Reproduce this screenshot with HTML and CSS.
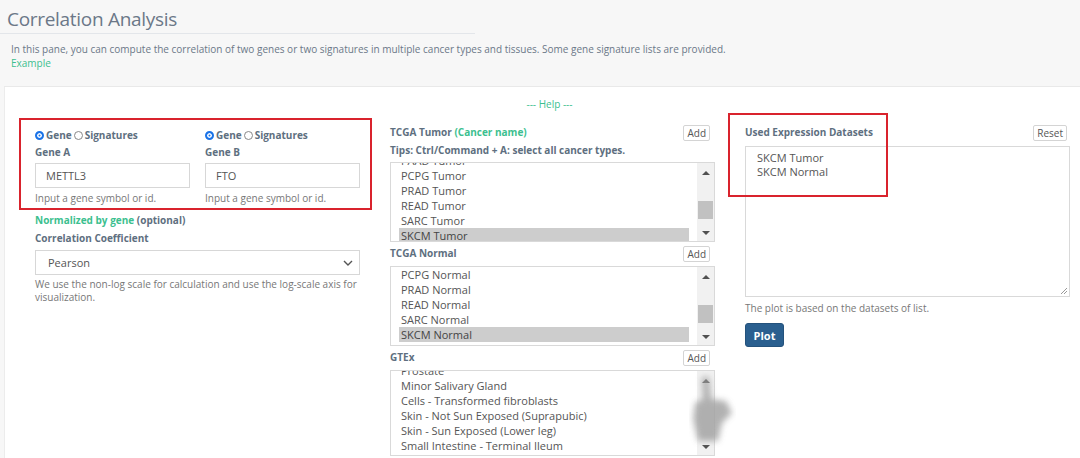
FILE: index.html
```html
<!DOCTYPE html>
<html lang="en">
<head>
    <meta charset="UTF-8">
    <title>Correlation Analysis</title>
    <link rel="stylesheet" href="styles.css">
</head>
<body>
    <div class="page-header">
        <h1 class="title">Correlation Analysis</h1>
        <p class="intro">In this pane, you can compute the correlation of two genes or two signatures in multiple cancer types and tissues. Some gene signature lists are provided.</p>
        <a class="example" href="#">Example</a>
    </div>

    <div class="panel">
        <div class="help"><a href="#">--- Help ---</a></div>
        <div class="columns">
            <!-- genes -->
            <div class="col-left">
                <div class="gene-box">
                    <div class="gene-field">
                        <div class="radios">
                            <span class="radio checked"></span><b>Gene</b>
                            <span class="radio"></span><b>Signatures</b>
                        </div>
                        <label class="lbl">Gene A</label>
                        <div class="text-input">METTL3</div>
                        <p class="hint">Input a gene symbol or id.</p>
                    </div>
                    <div class="gene-field">
                        <div class="radios">
                            <span class="radio checked"></span><b>Gene</b>
                            <span class="radio"></span><b>Signatures</b>
                        </div>
                        <label class="lbl">Gene B</label>
                        <div class="text-input">FTO</div>
                        <p class="hint">Input a gene symbol or id.</p>
                    </div>
                </div>
                <div class="options">
                    <div class="lbl"><span class="green">Normalized by gene</span> (optional)</div>
                    <div class="lbl coef">Correlation Coefficient</div>
                    <div class="select">
                        <span>Pearson</span>
                        <svg width="10" height="6" viewBox="0 0 10 6"><path d="M1 1l4 4 4-4" fill="none" stroke="#555" stroke-width="1.4"/></svg>
                    </div>
                    <p class="hint">We use the non-log scale for calculation and use the log-scale axis for visualization.</p>
                </div>
            </div>

            <!-- datasets -->
            <div class="col-mid">
                <div class="list-head first">
                    <div>
                        <div class="lbl">TCGA Tumor <span class="green">(Cancer name)</span></div>
                        <div class="lbl tips">Tips: Ctrl/Command + A: select all cancer types.</div>
                    </div>
                    <button class="btn-small">Add</button>
                </div>
                <div class="listbox">
                    <ul class="items shift-tumor">
                        <li>PAAD Tumor</li>
                        <li>PCPG Tumor</li>
                        <li>PRAD Tumor</li>
                        <li>READ Tumor</li>
                        <li>SARC Tumor</li>
                        <li class="sel">SKCM Tumor</li>
                    </ul>
                    <div class="scrollbar">
                        <span class="arrow up"></span>
                        <span class="thumb"></span>
                        <span class="arrow down"></span>
                    </div>
                </div>

                <div class="list-head">
                    <div class="lbl">TCGA Normal</div>
                    <button class="btn-small">Add</button>
                </div>
                <div class="listbox">
                    <ul class="items">
                        <li>PCPG Normal</li>
                        <li>PRAD Normal</li>
                        <li>READ Normal</li>
                        <li>SARC Normal</li>
                        <li class="sel">SKCM Normal</li>
                        <li>STAD Normal</li>
                    </ul>
                    <div class="scrollbar">
                        <span class="arrow up"></span>
                        <span class="thumb"></span>
                        <span class="arrow down"></span>
                    </div>
                </div>

                <div class="list-head">
                    <div class="lbl">GTEx</div>
                    <button class="btn-small">Add</button>
                </div>
                <div class="listbox tall">
                    <ul class="items shift-gtex">
                        <li>Prostate</li>
                        <li>Minor Salivary Gland</li>
                        <li>Cells - Transformed fibroblasts</li>
                        <li>Skin - Not Sun Exposed (Suprapubic)</li>
                        <li>Skin - Sun Exposed (Lower leg)</li>
                        <li>Small Intestine - Terminal Ileum</li>
                    </ul>
                    <div class="scrollbar">
                        <span class="arrow up"></span>
                        <span class="thumb hidden"></span>
                        <span class="arrow down"></span>
                    </div>
                </div>
            </div>

            <!-- used datasets -->
            <div class="col-right">
                <div class="list-head used-head">
                    <div class="lbl">Used Expression Datasets</div>
                    <button class="btn-small">Reset</button>
                </div>
                <div class="textarea">SKCM Tumor<br>SKCM Normal
                    <svg class="grip" width="9" height="9" viewBox="0 0 9 9"><path d="M8 2L2 8M8 5L5 8" stroke="#999" stroke-width="1"/></svg>
                </div>
                <p class="hint">The plot is based on the datasets of list.</p>
                <button class="btn-plot">Plot</button>
                <div class="mark"></div>
            </div>
        </div>
        <svg class="smudge" width="56" height="84" viewBox="0 0 56 84">
            <defs><filter id="soft"><feGaussianBlur stdDeviation="3"/></filter></defs>
            <path d="M18 8 L25 8 L27 30 L42 32 L48 44 L38 54 L34 72 L14 72 L9 50 L11 34 L19 30 Z" fill="#a4a4a4" opacity="0.85" filter="url(#soft)"/>
        </svg>
    </div>
</body>
</html>
```

FILE: styles.css
```css
body {
    margin: 0;
    background-color: #f7f7f7;
    font-family: "Open Sans", "Noto Sans", sans-serif;
    font-size: 10px;
    color: #666;
    width: 1080px;
    height: 458px;
    overflow: hidden;
}
.page-header {
    height: 86px;
}
.title {
    margin: 0;
    width: 475px;
    padding: 8px 0 0 7px;
    height: 34px;
    box-sizing: border-box;
    border-bottom: 1px solid #e3e6ea;
    font-size: 19px;
    letter-spacing: -0.3px;
    font-weight: normal;
    color: #6b7888;
    line-height: 22px;
}
.intro {
    margin: 8px 0 0 11px;
    color: #6b7888;
    line-height: 14px;
}
.example {
    display: block;
    margin-left: 11px;
    color: #3cbf8f;
    text-decoration: none;
    line-height: 14px;
}
.panel {
    position: relative;
    margin-left: 4px;
    background: #fff;
    border-top: 1px solid #e9e9e9;
    border-left: 1px solid #ececec;
    height: 380px;
    padding-left: 14px;
}
.help {
    text-align: center;
    padding-top: 10px;
    height: 21px;
}
.help a {
    color: #3cbf8f;
    text-decoration: none;
}
.columns {
    display: flex;
}
.col-left {
    width: 353px;
}
.col-mid {
    width: 325px;
    margin-left: 18px;
}
.col-right {
    position: relative;
    width: 325px;
    margin-left: 30px;
}
.gene-box {
    display: flex;
    gap: 15px;
    border: 2px solid #d9232d;
    padding: 8px 0 0 14px;
    height: 92px;
    box-sizing: border-box;
}
.gene-field {
    width: 155px;
}
.radios {
    display: flex;
    align-items: center;
    color: #5e6f80;
    height: 14px;
    margin-bottom: 1px;
}
.radios b {
    margin: 0 2px 0 2px;
}
.radio {
    width: 9px;
    height: 9px;
    border: 1px solid #888;
    border-radius: 50%;
    box-sizing: border-box;
    background: #fff;
}
.radio.checked {
    border: 2px solid #1a73e8;
    background: #1a73e8;
    box-shadow: inset 0 0 0 1.5px #fff;
}
.lbl {
    display: block;
    font-weight: bold;
    color: #5e6f80;
    line-height: 18px;
}
.green {
    color: #3cbf8f;
}
.text-input {
    height: 25px;
    box-sizing: border-box;
    border: 1px solid #d7d7d7;
    padding-left: 10px;
    line-height: 23px;
    color: #555;
    font-size: 11px;
    margin-top: 2px;
}
.hint {
    margin: 4px 0 0 0;
    color: #777;
    line-height: 13px;
}
.options {
    padding-left: 16px;
    padding-right: 12px;
    margin-top: 1px;
}
.coef {
    margin-bottom: 3px;
}
.select {
    display: flex;
    justify-content: space-between;
    align-items: center;
    height: 25px;
    box-sizing: border-box;
    border: 1px solid #d7d7d7;
    padding: 0 6px 0 12px;
    font-size: 11px;
    color: #555;
}
.options .hint {
    margin-top: 3px;
}
.list-head {
    display: flex;
    justify-content: space-between;
    align-items: flex-start;
    padding-right: 5px;
    height: 24px;
    box-sizing: border-box;
    padding-top: 2px;
}
.list-head .btn-small {
    margin-top: 2px;
}
.list-head.first {
    height: auto;
    padding-top: 5px;
    margin-bottom: 3px;
}
.btn-small {
    font-family: inherit;
    font-size: 10px;
    color: #555;
    background: #fff;
    border: 1px solid #d4d4d4;
    border-radius: 2px;
    padding: 0 3px;
    height: 16px;
    line-height: 14px;
}
.listbox {
    display: flex;
    height: 80px;
    border: 1px solid #d9d9d9;
    box-sizing: border-box;
    overflow: hidden;
}
.listbox.tall {
    height: 86px;
}
.items {
    flex: 1;
    list-style: none;
    margin: 0;
    padding: 0 8px 0 8px;
    font-size: 11px;
    color: #555;
}
.items li {
    height: 15px;
    line-height: 15px;
    padding-left: 2px;
}
.items li.sel {
    background: #cdcdcd;
    color: #444;
}
.shift-tumor {
    margin-top: -10px;
}
.shift-gtex {
    margin-top: -8px;
}
.scrollbar {
    width: 17px;
    background: #f1f1f1;
    display: flex;
    flex-direction: column;
    align-items: center;
}
.arrow {
    width: 0;
    height: 0;
    border-left: 4px solid transparent;
    border-right: 4px solid transparent;
}
.arrow.up {
    border-bottom: 4px solid #505050;
    margin-top: 8px;
}
.arrow.down {
    border-top: 4px solid #505050;
    margin-top: auto;
    margin-bottom: 6px;
}
.thumb {
    width: 15px;
    height: 18px;
    background: #c1c1c1;
    margin-top: 26px;
}
.thumb.hidden {
    visibility: hidden;
}
.used-head {
    padding-top: 5px;
    padding-right: 3px;
    height: 28px;
}
.textarea {
    position: relative;
    height: 151px;
    box-sizing: border-box;
    border: 1px solid #d9d9d9;
    padding: 4px 11px;
    font-size: 11px;
    line-height: 14px;
    color: #555;
}
.grip {
    position: absolute;
    right: 1px;
    bottom: 1px;
}
.col-right .hint {
    margin-top: 5px;
}
.btn-plot {
    display: block;
    margin-top: 8px;
    font-family: inherit;
    font-size: 11px;
    font-weight: bold;
    color: #fff;
    background: #2a5f8f;
    border: 1px solid #24527c;
    border-radius: 3px;
    width: 39px;
    height: 24px;
}
.mark {
    position: absolute;
    left: -17px;
    top: -5px;
    width: 156px;
    height: 80px;
    border: 2px solid #d9232d;
}
.smudge {
    position: absolute;
    left: 679px;
    top: 282px;
}
```
